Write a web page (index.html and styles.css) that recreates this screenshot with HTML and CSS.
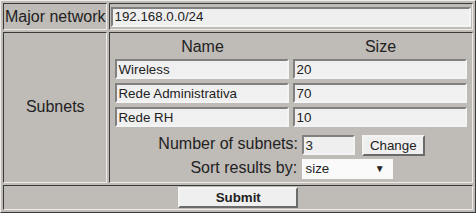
FILE: index.html
```html
<!DOCTYPE html>
<html lang="en">
<head>
  <meta charset="UTF-8" />
  <title>Subnet calculator</title>
  <link rel="stylesheet" href="styles.css">
</head>
<body>

  <form id="vlsm-form">
    <table class="main-table">
      <tr class="top-row">
        <td class="label-cell">Major network</td>
        <td class="field-cell"><input type="text" class="wide-input" value="192.168.0.0/24"></td>
      </tr>
      <tr>
        <td class="label-cell">Subnets</td>
        <td class="field-cell subnets-cell">
          <table class="subnet-table">
            <tr>
              <th>Name</th>
              <th>Size</th>
            </tr>
            <tr>
              <td><input type="text" value="Wireless"></td>
              <td><input type="text" value="20"></td>
            </tr>
            <tr>
              <td><input type="text" value="Rede Administrativa"></td>
              <td><input type="text" value="70"></td>
            </tr>
            <tr>
              <td><input type="text" value="Rede RH"></td>
              <td><input type="text" value="10"></td>
            </tr>
          </table>
          <div class="line">
            Number of subnets: <input type="text" class="count-input" value="3">
            <button type="button" class="btn">Change</button>
          </div>
          <div class="line">
            Sort results by:
            <span class="select-box">size <span class="arrow">&#9660;</span></span>
          </div>
        </td>
      </tr>
      <tr>
        <td colspan="2" class="submit-cell">
          <button type="submit" class="btn submit-btn">Submit</button>
        </td>
      </tr>
    </table>
  </form>

</body>
</html>
```

FILE: styles.css
```css
body {
  margin: 0;
  background: #bfbbb7;
  font-family: "Liberation Sans", Arial, sans-serif;
  font-size: 16px;
  color: #222;
}

.main-table {
  width: 476px;
  height: 213px;
  border-collapse: separate;
  border-spacing: 2px;
  border: 1px solid;
  border-color: #eeebe8 #3a3a3a #3a3a3a #eeebe8;
  background: #bfbbb7;
}

.main-table > tbody > tr > td {
  border: 1px solid;
  border-color: #3a3a3a #eeebe8 #eeebe8 #3a3a3a;
  padding: 1px;
}

.top-row {
  height: 27px;
}

.label-cell {
  width: 104px;
  text-align: center;
  white-space: nowrap;
}

.field-cell {
  padding: 1px 2px;
}

input {
  font-family: "Liberation Sans", Arial, sans-serif;
  font-size: 13.33px;
  color: #222;
  background: #efefef;
  border: 2px solid;
  border-color: #808080 #f4f4f4 #f4f4f4 #808080;
  padding: 1px 1px;
  height: 20px;
  box-sizing: border-box;
  margin: 0;
}

.wide-input {
  width: 100%;
  display: block;
}

.subnets-cell {
  text-align: center;
  padding-bottom: 2px;
}

.subnet-table {
  margin: 0 auto;
  border-spacing: 4px 4px;
}

.subnet-table th {
  font-weight: normal;
  padding: 0;
  height: 16px;
  line-height: 16px;
}

.subnet-table td {
  padding: 0;
}

.subnet-table input {
  width: 174px;
  display: block;
  background: #f0f0f0;
}

.line {
  margin-top: 2px;
  height: 22px;
  line-height: 22px;
}

.count-input {
  width: 53px;
  vertical-align: middle;
}

.btn {
  font-family: "Liberation Sans", Arial, sans-serif;
  font-size: 13.33px;
  color: #222;
  background: #efefef;
  border: 2px solid;
  border-color: #f4f4f4 #6a6a6a #6a6a6a #f4f4f4;
  padding: 0 6px;
  height: 21px;
  vertical-align: middle;
  margin-left: 2px;
}

.select-box {
  display: inline-block;
  width: 91px;
  height: 20px;
  box-sizing: border-box;
  background: #fafafa;
  font-size: 13.33px;
  line-height: 20px;
  text-align: left;
  padding-left: 4px;
  vertical-align: middle;
  position: relative;
}

.arrow {
  position: absolute;
  right: 8px;
  top: 0;
  font-size: 10px;
}

.submit-cell {
  text-align: center;
}

.submit-btn {
  width: 120px;
  font-weight: bold;
  margin: 0;
}
```
